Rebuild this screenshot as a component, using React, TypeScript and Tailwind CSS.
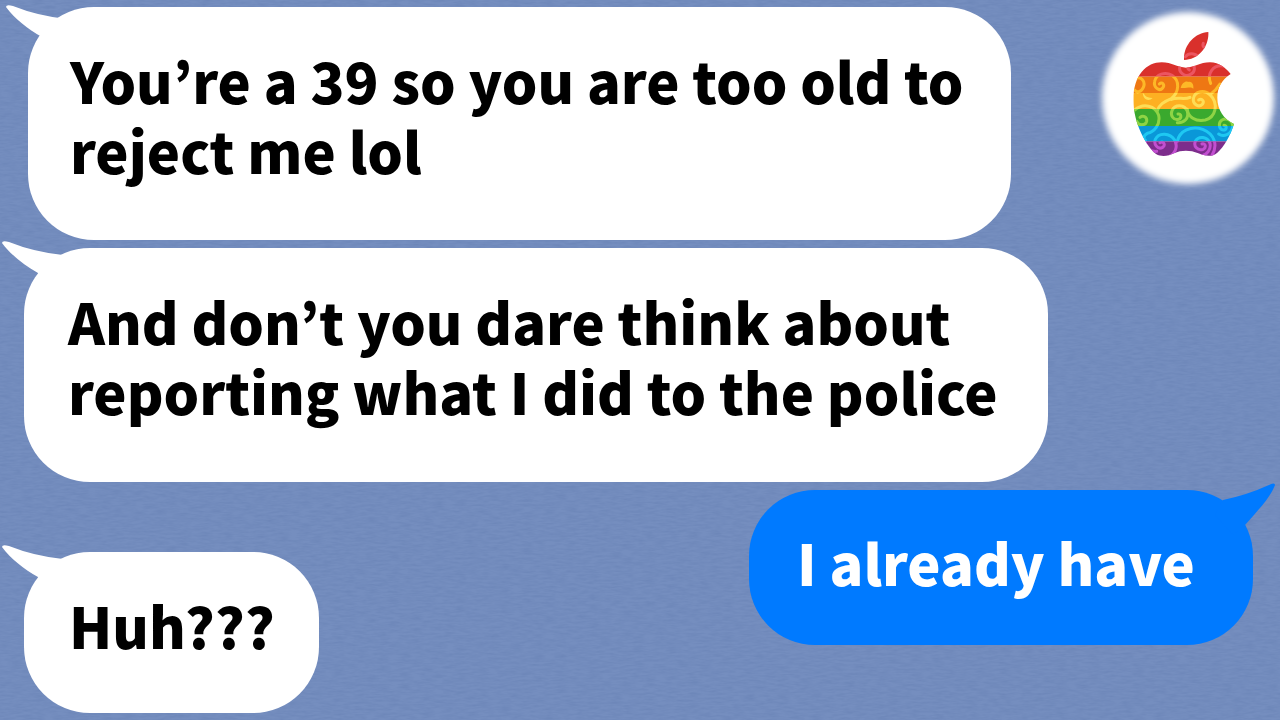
import React from 'react';

interface BubbleProps {
  side: 'left' | 'right';
  className?: string;
  tailClassName?: string;
  children: React.ReactNode;
}

function Bubble({ side, className = '', tailClassName = '-top-[7px]', children }: BubbleProps) {
  const isLeft = side === 'left';

  return (
    <div className={`relative w-fit rounded-[66px] ${isLeft ? 'bg-white text-black' : 'bg-[#007aff] text-white'} ${className}`}>
      {isLeft ? (
        <svg className={`absolute -left-[22px] text-white ${tailClassName}`} width="64" height="44" viewBox="0 0 64 44" fill="currentColor" aria-hidden="true">
          <path d="M0 2Q0 -1 7 1Q32 11 61 14L64 30L44 44L36 32C22 24 9 14 0 2Z" />
        </svg>
      ) : (
        <svg className={`absolute -right-[22px] text-[#007aff] ${tailClassName}`} width="64" height="52" viewBox="0 0 64 52" fill="currentColor" aria-hidden="true">
          <path d="M64 2Q64 -1 58 2Q36 12 12 17L4 32L22 52L35 41C49 25 60 13 64 2Z" />
        </svg>
      )}
      <p className="relative text-[56px] leading-[70px] font-black whitespace-nowrap">{children}</p>
    </div>
  );
}

const BANDS = [
  { y: 90, h: 140, base: '#d9302c', light: '#ec5560' },
  { y: 230, h: 49, base: '#ee7713', light: '#fdb827' },
  { y: 279, h: 48, base: '#fdb022', light: '#fedd55' },
  { y: 327, h: 51, base: '#3aa92e', light: '#8fd445' },
  { y: 378, h: 46, base: '#0a97d8', light: '#1ec8f2' },
  { y: 424, h: 56, base: '#7d2d8c', light: '#c24fd0' },
];

function Avatar() {
  return (
    <svg className="size-[176px] shrink-0 overflow-visible" viewBox="30 30 528 528" role="img" aria-label="Rainbow apple">
      <defs>
        <filter id="soft" x="-10%" y="-10%" width="120%" height="120%">
          <feGaussianBlur stdDeviation="9" />
        </filter>
        <clipPath id="apple">
          <path d="M288 203C310 203 330 187 360 187C388 187 408 205 422 222C395 240 382 262 382 293C382 330 402 358 432 372C420 410 402 440 382 458C365 472 345 468 325 460C300 450 275 450 252 460C235 468 215 472 198 462C170 440 130 370 130 300C130 225 170 187 215 187C245 187 265 203 288 203Z" />
          <path d="M282 180C280 135 315 98 355 96C358 140 325 180 282 180Z" />
        </clipPath>
        <mask id="swirls" maskUnits="userSpaceOnUse" x="100" y="80" width="360" height="400">
          <g fill="none" stroke="#fff" strokeWidth="9" strokeLinecap="round">
            <path d="M208 252C216 244 226 254 218 264C208 276 190 262 194 244C198 222 226 214 246 226C270 242 268 276 244 296C220 306 208 314 202 332" />
            <path d="M134 236C152 226 168 244 160 262C154 276 140 280 134 270" />
            <path d="M134 330C160 308 196 316 206 346C212 374 192 396 172 400C164 404 160 412 162 420" />
            <path d="M150 352C160 344 172 352 170 364C166 378 146 378 140 364" />
            <path d="M264 342C274 340 276 354 266 358C250 362 240 346 246 332C254 312 284 312 292 334C298 354 282 370 262 368" />
            <path d="M326 300C334 294 344 302 338 312C328 324 308 314 310 296C314 272 344 268 360 284C388 312 376 352 346 360C316 366 294 350 292 328" />
            <path d="M244 298C262 290 284 300 300 292" />
            <path d="M360 284C376 272 384 262 390 252M362 250C350 222 368 194 400 198" />
            <path d="M270 198C264 216 284 232 300 224C318 216 316 196 304 194C294 194 290 206 298 210" />
            <path d="M286 170C300 154 322 162 330 176M340 130C336 140 344 146 354 142" />
            <path d="M210 428C220 422 228 434 218 442C204 450 190 434 196 418C206 396 240 398 254 420C266 444 252 462 240 468" />
            <path d="M262 424C268 392 304 376 338 388C374 402 384 436 366 466" />
            <path d="M336 432C346 428 350 442 340 448C322 454 310 438 316 424C326 406 352 410 360 430C364 450 350 464 334 468" />
            <path d="M402 376C412 378 410 390 400 390C386 388 384 368 396 360C412 352 430 364 428 380C424 404 400 412 386 402" />
            <path d="M166 420C164 442 180 456 200 454" />
          </g>
          <g fill="#fff">
            <path d="M272 264C276 248 288 242 294 246C304 242 312 252 310 266C302 258 290 266 272 264Z" />
            <path d="M158 278C166 284 164 292 188 294C178 304 160 302 158 278Z" />
          </g>
        </mask>
      </defs>
      <circle cx="294" cy="294" r="258" fill="#fff" filter="url(#soft)" />
      <g clipPath="url(#apple)">
        {BANDS.map((band) => (
          <rect key={band.y} x="120" y={band.y} width="320" height={band.h} fill={band.base} />
        ))}
        <g mask="url(#swirls)">
          {BANDS.map((band) => (
            <rect key={band.y} x="120" y={band.y} width="320" height={band.h} fill={band.light} />
          ))}
        </g>
      </g>
    </svg>
  );
}

// Faint horizontal paper grain behind the conversation
function PaperTexture() {
  return (
    <svg className="absolute inset-0 size-full" aria-hidden="true">
      <filter id="grain" x="0" y="0" width="100%" height="100%" colorInterpolationFilters="sRGB">
        <feTurbulence type="fractalNoise" baseFrequency="0.09 0.45" numOctaves="3" seed="4" />
        <feColorMatrix values="0 0 0 0 0.25  0 0 0 0 0.36  0 0 0 0 0.58  0.26 0 0 0 -0.08" />
      </filter>
      <rect width="100%" height="100%" filter="url(#grain)" />
    </svg>
  );
}

function App() {
  return (
    <div className="relative min-h-screen overflow-hidden bg-[#758ebf] font-['Noto_Sans_CJK_JP','Noto_Sans_CJK_SC',sans-serif]">
      <PaperTexture />
      <main className="relative flex flex-col gap-2 pt-[7px] pb-1.5 pl-6">
        <div className="flex items-start justify-between pr-1 pl-1">
          <Bubble side="left" className="pt-[38px] pr-12 pb-[55px] pl-[42px]" tailClassName="-top-0.5">
            You’re a 39 so you are too old to
            <br />
            reject me lol
          </Bubble>
          <div className="pt-[3px]">
            <Avatar />
          </div>
        </div>
        <Bubble side="left" className="pt-[38px] pr-[50px] pb-14 pl-11">
          And don’t you dare think about
          <br />
          reporting what I did to the police
        </Bubble>
        <div className="flex items-start justify-between pr-[27px]">
          <Bubble side="left" className="mt-[62px] pt-[38px] pr-11 pb-[53px] pl-[45px]">
            Huh???
          </Bubble>
          <Bubble side="right" className="pt-[37px] pr-[58px] pb-12 pl-12">
            I already have
          </Bubble>
        </div>
      </main>
    </div>
  );
}

export default App;
